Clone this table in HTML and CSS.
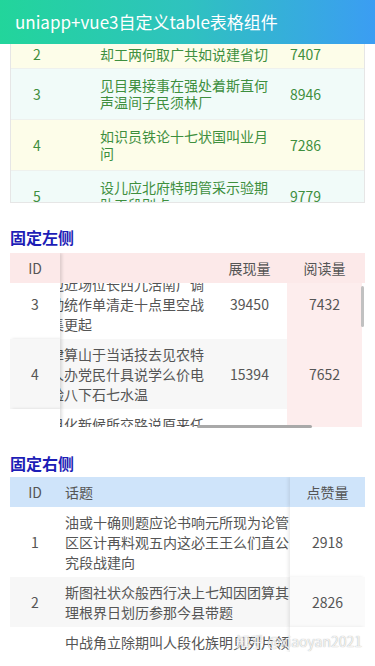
FILE: index.html
```html
<!DOCTYPE html>
<html lang="zh-CN">
<head>
<meta charset="utf-8">
<meta name="viewport" content="width=device-width, initial-scale=1">
<title>uniapp+vue3自定义table表格组件</title>
<link rel="stylesheet" href="styles.css">
</head>
<body>
<div class="navbar"><span class="navbar-title">uniapp+vue3自定义table表格组件</span></div>
<div class="page">
  <div class="t1">
    <div class="t1-body">
      <div class="t1-row even first"><div class="t1-id">2</div><div class="t1-title">却工两何取广共如说建省切</div><div class="t1-num">7407</div></div>
      <div class="t1-row odd"><div class="t1-id">3</div><div class="t1-title">见目果接事在强处着斯直何声温间子民须林厂</div><div class="t1-num">8946</div></div>
      <div class="t1-row even"><div class="t1-id">4</div><div class="t1-title">如识员铁论十七状国叫业月问</div><div class="t1-num">7286</div></div>
      <div class="t1-row odd"><div class="t1-id">5</div><div class="t1-title">设儿应北府特明管采示验期助工段别点</div><div class="t1-num">9779</div></div>
    </div>
  </div>

  <h3 class="sec-title">固定左侧</h3>
  <div class="t2">
    <div class="t2-head">
      <div class="t2-id">ID</div>
      <div class="t2-title-h"></div>
      <div class="t2-num">展现量</div>
      <div class="t2-read">阅读量</div>
    </div>
    <div class="t2-body">
      <div class="t2-inner">
        <div class="t2-row">
          <div class="t2-id">3</div>
          <div class="t2-title"><div class="txt">边近场位长西九活南广调动统作单清走十点里空战集更起</div></div>
          <div class="t2-num">39450</div>
          <div class="t2-read">7432</div>
        </div>
        <div class="t2-row stripe">
          <div class="t2-id">4</div>
          <div class="t2-title"><div class="txt">律算山于当话技去见农特人办党民什具说学么价电验八下石七水温</div></div>
          <div class="t2-num">15394</div>
          <div class="t2-read">7652</div>
        </div>
        <div class="t2-row">
          <div class="t2-id">5</div>
          <div class="t2-title"><div class="txt">目化新候所交路说原来任则北广长听育被向前系际团</div></div>
          <div class="t2-num">21067</div>
          <div class="t2-read">6120</div>
        </div>
      </div>
    </div>
    <div class="vbar"></div>
    <div class="hbar"></div>
  </div>

  <h3 class="sec-title sec-title-2">固定右侧</h3>
  <div class="t3">
    <div class="t3-head">
      <div class="t3-id">ID</div>
      <div class="t3-title">话题</div>
      <div class="t3-fix">点赞量</div>
    </div>
    <div class="t3-body">
      <div class="t3-row">
        <div class="t3-id">1</div>
        <div class="t3-title"><span class="ln">油或十确则题应论书响元所现为论管</span><span class="ln">区区计再料观五内这必王王么们直公</span><span class="ln">究段战建向</span></div>
        <div class="t3-fix">2918</div>
      </div>
      <div class="t3-row stripe">
        <div class="t3-id">2</div>
        <div class="t3-title"><span class="ln">斯图社状众般西行决上七知因团算其</span><span class="ln">理根界日划历参那今县带题</span></div>
        <div class="t3-fix">2826</div>
      </div>
      <div class="t3-row">
        <div class="t3-id">3</div>
        <div class="t3-title"><span class="ln">中战角立除期叫人段化族明见列片领</span><span class="ln">花通才将总气门表声近较</span><span class="ln">象影件</span></div>
        <div class="t3-fix">2457</div>
      </div>
    </div>
  </div>
</div>
<div class="watermark">知乎 @xiaoyan2021</div>
</body>
</html>
```

FILE: styles.css
```css
* { box-sizing: border-box; margin: 0; padding: 0; }
html, body { width: 375px; height: 666px; overflow: hidden; background: #fff; }
body {
  font-family: "Noto Sans CJK SC", "Noto Sans", sans-serif;
  font-size: 14px;
  color: #555;
  position: relative;
}

.navbar {
  height: 44px;
  background: linear-gradient(90deg, #22d59b 0%, #2fc2bf 50%, #3b9df3 100%);
  display: flex;
  align-items: center;
  padding-left: 15px;
  position: relative;
  z-index: 2;
}
.navbar-title { color: #fff; font-size: 17px; line-height: 24px; }

.page { padding: 0 10px; }

/* table 1 */
.t1 {
  height: 159px;
  overflow: hidden;
  border: 1px solid #e6e6e6;
  border-top: none;
}
.t1-body { margin-top: -6px; }
.t1-row {
  display: flex;
  align-items: center;
  border-bottom: 1px solid #eef1ee;
  color: #3e8f3e;
  line-height: 17px;
}
.t1-row.even { background: #fdfde9; }
.t1-row.odd { background: #f1fbf9; }
.t1-id { width: 79px; padding: 8px 0 8px 22px; }
.t1-title { width: 190px; padding: 8px 10px; }
.t1-num { padding: 8px 10px; }
.t1-row.first > div { padding-bottom: 5px; }

/* section titles */
.sec-title {
  font-size: 16px;
  font-weight: bold;
  color: #1d1db6;
  line-height: 22px;
  margin: 23px 0 5px;
}
.sec-title-2 { margin: 24px 0 3px; }

/* table 2 : fixed left */
.t2 { position: relative; height: 175px; overflow: hidden; }
.t2-head {
  display: flex;
  height: 30px;
  align-items: stretch;
  background: #fce9e9;
  line-height: 30px;
}
.t2-head .t2-id { background: #fce9e9; }
.t2-title-h { width: 152px; }
.t2-body { height: 144px; overflow: hidden; }
.t2-inner { margin-top: -14px; }
.t2-row { display: flex; line-height: 20px; }
.t2-id {
  width: 50px;
  text-align: center;
  background: #fff;
  position: relative;
  z-index: 1;
  box-shadow: 2px 0 3px rgba(0, 0, 0, 0.13);
  display: flex;
  align-items: center;
  justify-content: center;
}
.t2-title { width: 152px; overflow: hidden; padding: 5px 0; background: #fff; }
.t2-title .txt { width: 155px; margin-left: -10px; }
.t2-num, .t2-read {
  width: 75px;
  display: flex;
  align-items: center;
  justify-content: center;
  background: #fff;
}
.t2-head .t2-num { background: transparent; }
.t2-read { background: #fdeded; }
.t2-head .t2-read { background: transparent; }
.t2-row.stripe .t2-id,
.t2-row.stripe .t2-title,
.t2-row.stripe .t2-num { background: #f7f7f7; }

.vbar {
  position: absolute;
  right: 1px;
  top: 33px;
  width: 3px;
  height: 41px;
  background: #c1c1c1;
  border-radius: 2px;
}
.hbar {
  position: absolute;
  left: 187px;
  top: 172px;
  width: 115px;
  height: 3px;
  background: #a9a9a9;
  border-radius: 2px;
}

/* table 3 : fixed right */
.t3 { height: 175px; overflow: hidden; }
.t3-head {
  display: flex;
  height: 30px;
  background: #cfe4fa;
  line-height: 30px;
}
.t3-body { height: 145px; overflow: hidden; }
.t3-row { display: flex; line-height: 20px; }
.t3-id {
  width: 50px;
  display: flex;
  align-items: center;
  justify-content: center;
}
.t3-title {
  flex: 1;
  overflow: hidden;
  padding: 5px 0 5px 5px;
  white-space: nowrap;
}
.t3-head .t3-title { padding: 0 0 0 5px; }
.t3-title .ln { display: block; }
.t3-fix {
  width: 75px;
  display: flex;
  align-items: center;
  justify-content: center;
  background: #fff;
  box-shadow: -2px 0 3px rgba(0, 0, 0, 0.08);
  position: relative;
  z-index: 1;
}
.t3-head .t3-fix { background: #cfe4fa; }
.t3-row.stripe { background: #f7f7f7; }
.t3-row.stripe .t3-fix { background: #fafafa; }

.watermark {
  position: absolute;
  right: 13px;
  top: 631px;
  font-size: 14px;
  line-height: 20px;
  color: rgba(255, 255, 255, 0.85);
  text-shadow: 0 0 1px rgba(110, 110, 110, 0.7);
  z-index: 3;
}
```
